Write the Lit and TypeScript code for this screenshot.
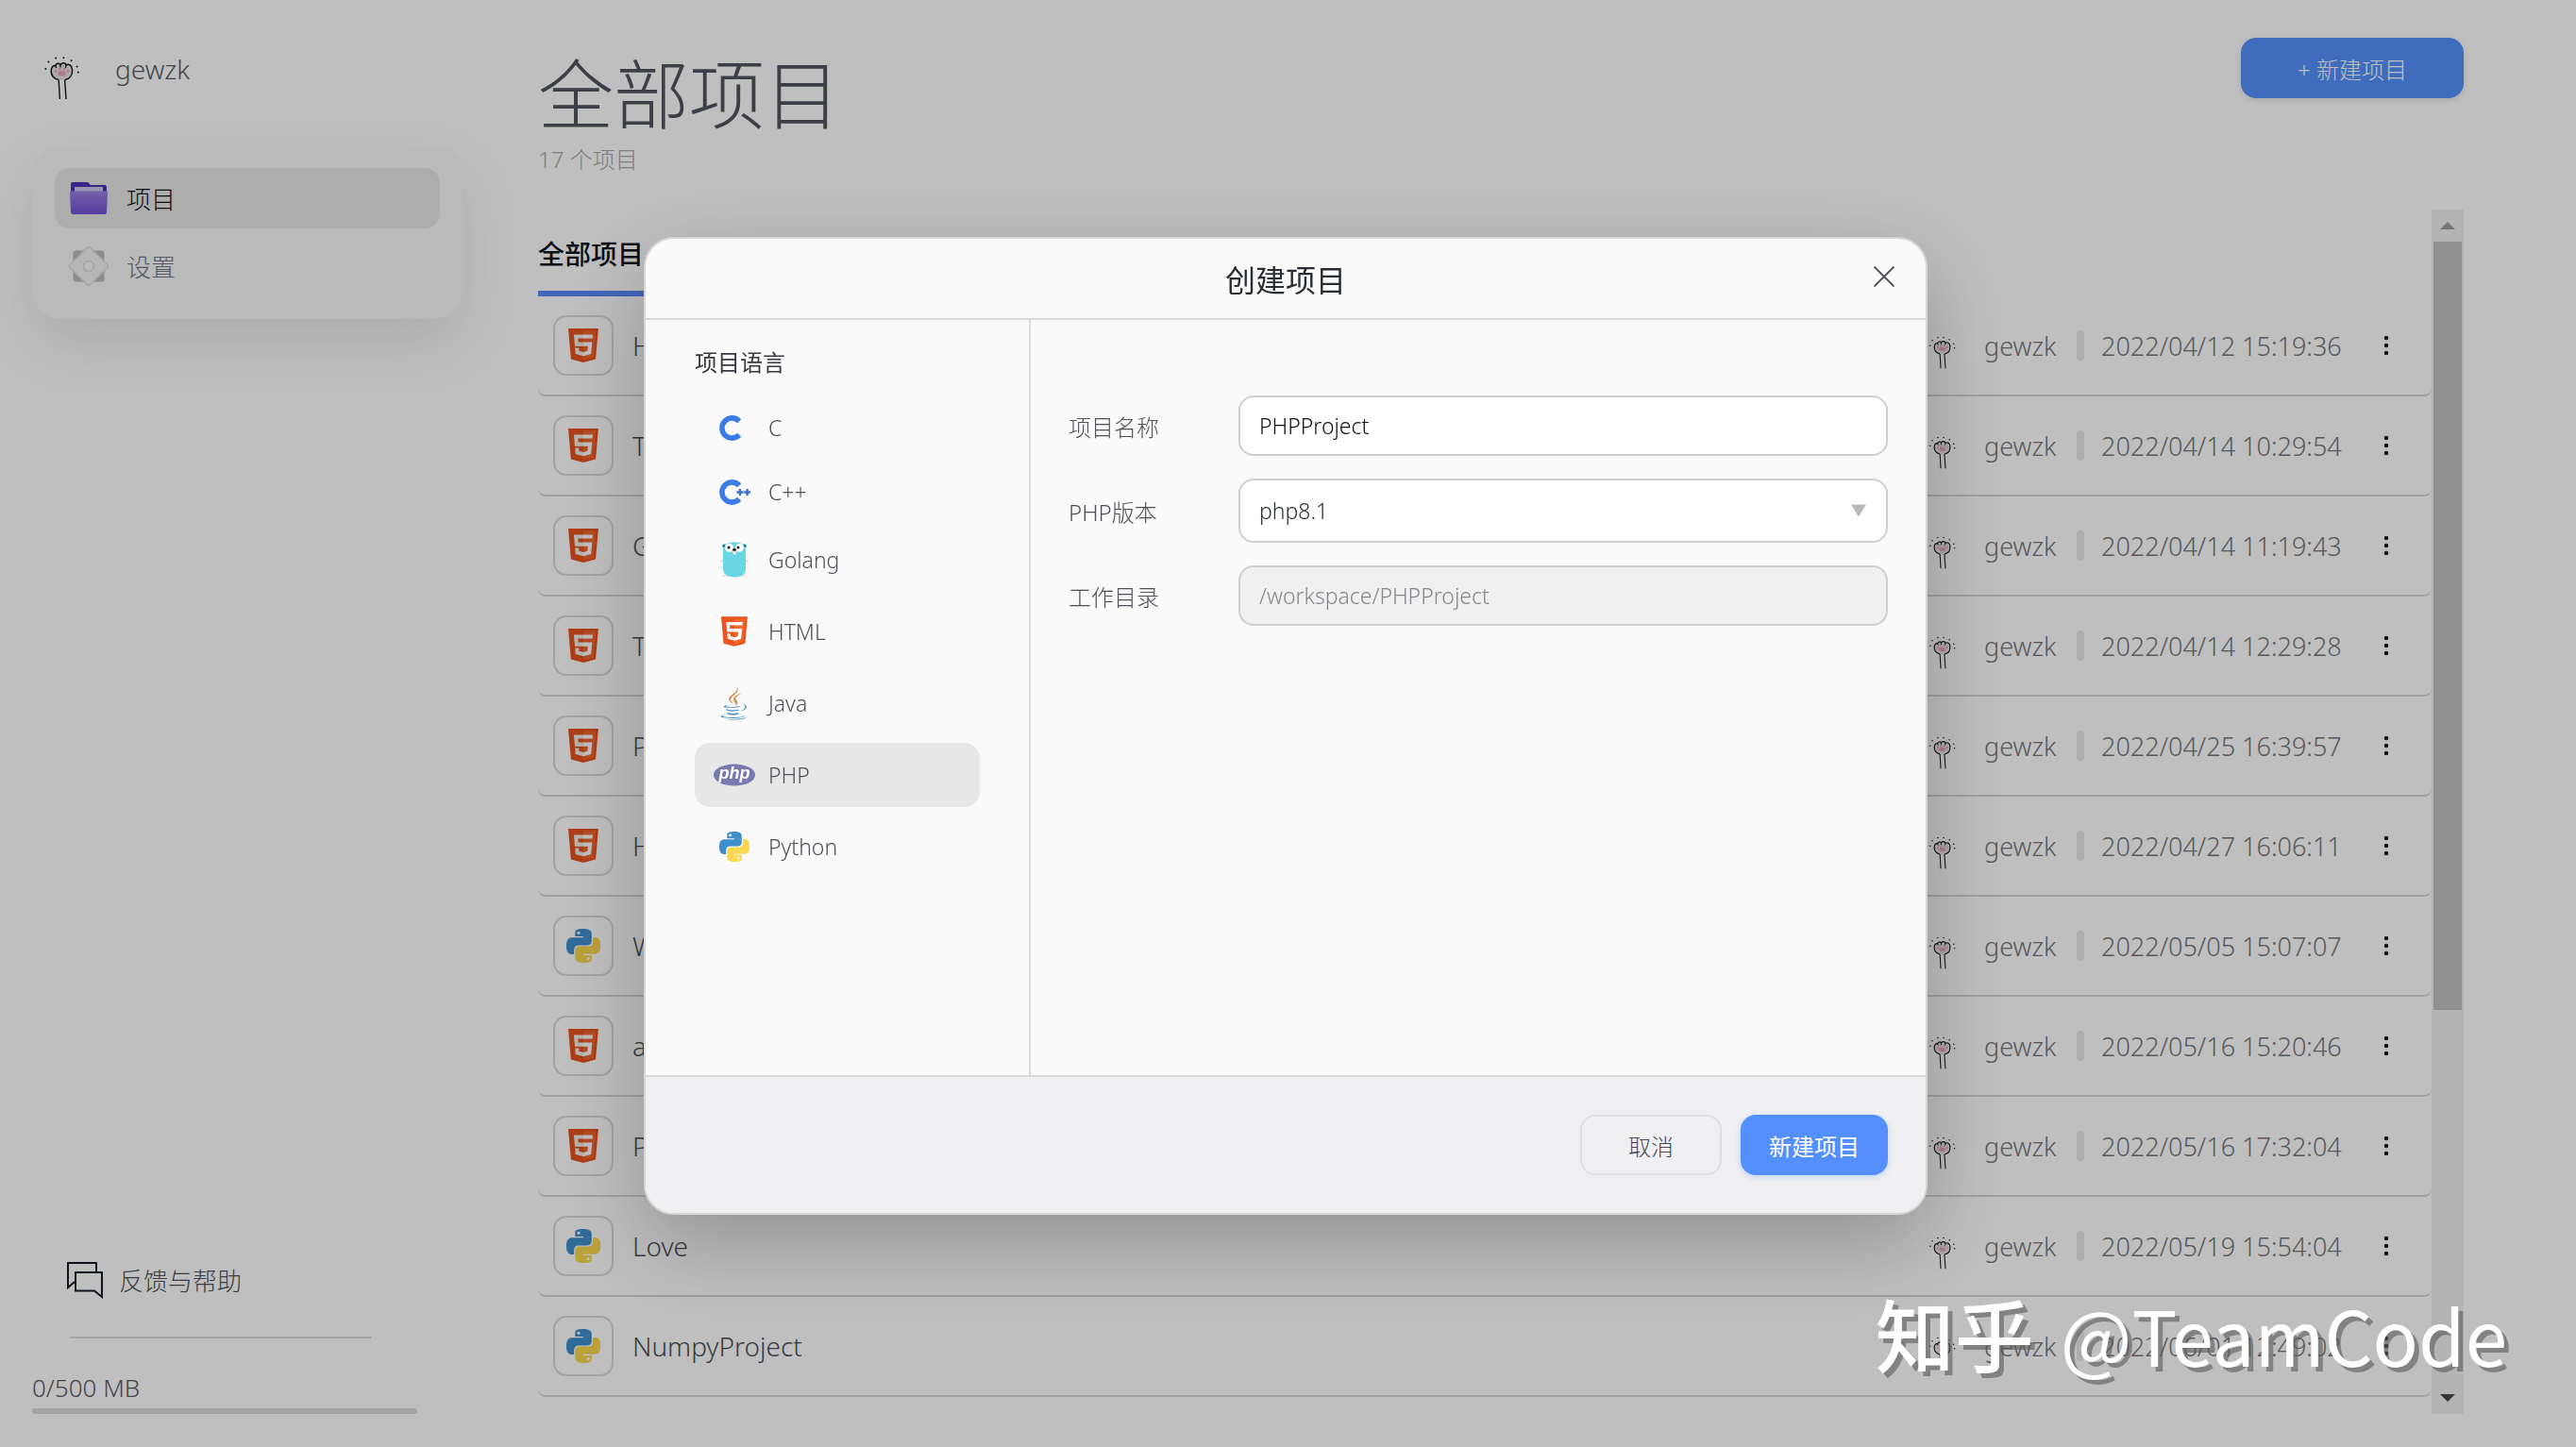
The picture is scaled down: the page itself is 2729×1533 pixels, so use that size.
import { LitElement, html, svg, css, TemplateResult } from "lit";
import { customElement, property, state } from "lit/decorators.js";
import { classMap } from "lit/directives/class-map.js";

type Lang = "c" | "cpp" | "go" | "html" | "java" | "php" | "python";

interface Project {
  name: string;
  lang: Lang;
  date: string;
}

const PROJECTS: Project[] = [
  { name: "H", lang: "html", date: "2022/04/12 15:19:36" },
  { name: "T", lang: "html", date: "2022/04/14 10:29:54" },
  { name: "G", lang: "html", date: "2022/04/14 11:19:43" },
  { name: "T", lang: "html", date: "2022/04/14 12:29:28" },
  { name: "P", lang: "html", date: "2022/04/25 16:39:57" },
  { name: "H", lang: "html", date: "2022/04/27 16:06:11" },
  { name: "W", lang: "python", date: "2022/05/05 15:07:07" },
  { name: "a", lang: "html", date: "2022/05/16 15:20:46" },
  { name: "P", lang: "html", date: "2022/05/16 17:32:04" },
  { name: "Love", lang: "python", date: "2022/05/19 15:54:04" },
  { name: "NumpyProject", lang: "python", date: "2022/06/01 12:49:02" },
];

const LANGUAGES: { id: Lang; label: string; compact?: boolean }[] = [
  { id: "c", label: "C", compact: true },
  { id: "cpp", label: "C++", compact: true },
  { id: "go", label: "Golang" },
  { id: "html", label: "HTML" },
  { id: "java", label: "Java" },
  { id: "php", label: "PHP" },
  { id: "python", label: "Python" },
];

const cArc = svg`<path d="M22.2 6.2A10.6 10.6 0 1 0 22.2 20.8" fill="none" stroke="#3b7be8" stroke-width="5.6"/>`;

const LANG_ICONS: Record<Lang, TemplateResult> = {
  c: html`<svg width="34" height="27" viewBox="0 0 34 27" aria-hidden="true">${cArc}</svg>`,
  cpp: html`<svg width="34" height="27" viewBox="0 0 34 27" aria-hidden="true">
    ${cArc}
    <path d="M19.4 13.5H26.6M23 9.9V17.1M27.2 13.5H34M30.6 10.1V16.9" stroke="#3f73c8" stroke-width="2.4" fill="none" />
  </svg>`,
  go: html`<svg width="30" height="40" viewBox="0 0 30 40" aria-hidden="true">
    <path d="M4.6 35.4L2 38.4L6.4 37.4ZM25.4 35.4L28 38.4L23.6 37.4Z" fill="#f0dcc4" />
    <path d="M3.6 20.6L0.6 22M26.4 20.6L29.4 22" stroke="#e2d6c0" stroke-width="2" />
    <circle cx="4.6" cy="5.6" r="2.6" fill="#6ad0df" />
    <circle cx="25.4" cy="5.6" r="2.6" fill="#6ad0df" />
    <circle cx="4.2" cy="5.6" r="1.4" fill="#26454b" />
    <circle cx="25.8" cy="5.6" r="1.4" fill="#26454b" />
    <path d="M15 1.2C22.6 1.2 27 4.6 27 11V29C27 35.6 23 38.4 15 38.4S3 35.6 3 29V11C3 4.6 7.4 1.2 15 1.2Z" fill="#6ad5e3" />
    <circle cx="9.6" cy="7.4" r="4.4" fill="#fff" />
    <circle cx="20.4" cy="7.4" r="4.4" fill="#fff" />
    <circle cx="9" cy="7" r="1.5" fill="#141c20" />
    <circle cx="19" cy="7" r="1.5" fill="#141c20" />
    <rect x="13.6" y="11" width="3" height="3.6" rx="1" fill="#fff" />
    <ellipse cx="15" cy="10.8" rx="3.2" ry="1.8" fill="#e8d8c0" />
    <ellipse cx="15" cy="9.4" rx="2" ry="1.4" fill="#141c20" />
  </svg>`,
  html: html`<svg class="html" viewBox="0 0 452 512" aria-hidden="true">
    <path fill="#e8531f" d="M41 460L0 0h451l-41 460-185 52" />
    <path fill="#f0662f" d="M226 472l149-41 35-394H226" />
    <path fill="#f3efec" d="M226 208h-75l-5-58h80V94H84l15 171h127zm0 147l-64-17-4-45h-56l7 89 117 32z" />
    <path fill="#fff" d="M226 265h69l-7 73-62 17v59l115-32 16-174H226zm0-171v56h136l5-56z" />
  </svg>`,
  java: html`<svg width="28" height="36" viewBox="20 0 94 128" preserveAspectRatio="none" aria-hidden="true">
    <path fill="#4a93c6" d="M47.617 98.12s-4.767 2.774 3.397 3.71c9.892 1.13 14.947.968 25.845-1.092 0 0 2.871 1.795 6.873 3.351-24.439 10.47-55.308-.607-36.115-5.969zM44.629 84.455s-5.348 3.959 2.823 4.805c10.567 1.091 18.91 1.18 33.354-1.6 0 0 1.993 2.025 5.132 3.131-29.542 8.64-62.446.68-41.309-6.336zM102.123 108.229s3.529 2.91-3.888 5.159c-14.102 4.272-58.706 5.56-71.094.171-4.451-1.938 3.899-4.625 6.526-5.192 2.739-.593 4.303-.485 4.303-.485-4.953-3.487-32.013 6.85-13.743 9.815 49.821 8.076 90.817-3.637 77.896-9.468zM49.912 70.294s-22.686 5.389-8.033 7.348c6.188.828 18.518.638 30.011-.326 9.39-.789 18.813-2.474 18.813-2.474s-3.308 1.419-5.704 3.053c-23.042 6.061-67.544 3.238-54.731-2.958 10.832-5.239 19.644-4.643 19.644-4.643zM90.609 93.041c23.421-12.167 12.591-23.86 5.032-22.285-1.848.385-2.677.72-2.677.72s.688-1.079 2-1.543c14.953-5.255 26.451 15.503-4.823 23.725 0-.002.359-.327.468-.617zM52.214 126.021c22.476 1.437 57-.8 57.817-11.436 0 0-1.571 4.032-18.577 7.231-19.186 3.612-42.854 3.191-56.887.874 0 .001 2.875 2.381 17.647 3.331z" />
    <path fill="#d28a3e" d="M69.802 61.271c6.025 6.935-1.58 13.17-1.58 13.17s15.289-7.891 8.269-17.777c-6.559-9.215-11.587-13.792 15.635-29.58 0 .001-42.731 10.67-22.324 34.187zM76.491 1.587S89.459 14.563 64.188 34.51c-20.266 16.006-4.621 25.13-.007 35.559-11.831-10.673-20.509-20.07-14.688-28.815C58.041 28.42 81.722 22.195 76.491 1.587z" />
  </svg>`,
  php: html`<svg width="44" height="24" viewBox="0 0 44 24" aria-hidden="true">
    <ellipse cx="22" cy="12" rx="22" ry="11.5" fill="#777bb0" />
    <text x="22" y="15.5" text-anchor="middle" font-family="Liberation Sans, sans-serif" font-size="18" font-weight="700" font-style="italic" fill="#fff">php</text>
  </svg>`,
  python: html`<svg class="python" viewBox="0 0 24 24" aria-hidden="true">
    <path fill="#3f8fcd" d="M14.25.18l.9.2.73.26.59.3.45.32.34.34.25.34.16.33.1.3.04.26.02.2-.01.13V8.5l-.05.63-.13.55-.21.46-.26.38-.3.31-.33.25-.35.19-.35.14-.33.1-.3.07-.26.04-.21.02H8.77l-.69.05-.59.14-.5.22-.41.27-.33.32-.27.35-.2.36-.15.37-.1.35-.07.32-.04.27-.02.21v3.06H3.17l-.21-.03-.28-.07-.32-.12-.35-.18-.36-.26-.36-.36-.35-.46-.32-.59-.28-.73-.21-.88-.14-1.05-.05-1.23.06-1.22.16-1.04.24-.87.32-.71.36-.57.4-.44.42-.33.42-.24.4-.16.36-.1.32-.05.24-.01h.16l.06.01h8.16v-.83H6.18l-.01-2.75-.02-.37.05-.34.11-.31.17-.28.25-.26.31-.23.38-.2.44-.18.51-.15.58-.12.64-.1.71-.06.77-.04.84-.02 1.27.05zm-6.3 1.98l-.23.33-.08.41.08.41.23.34.33.22.41.09.41-.09.33-.22.23-.34.08-.41-.08-.41-.23-.33-.33-.22-.41-.09-.41.09z" />
    <path fill="#f9d84f" d="M21.1 6.11l.28.06.32.12.35.18.36.27.36.35.35.47.32.59.28.73.21.88.14 1.04.05 1.23-.06 1.23-.16 1.04-.24.86-.32.71-.36.57-.4.45-.42.33-.42.24-.4.16-.36.09-.32.05-.24.02-.16-.01h-8.22v.82h5.84l.01 2.76.02.36-.05.34-.11.31-.17.29-.25.25-.31.24-.38.2-.44.17-.51.15-.58.13-.64.09-.71.07-.77.04-.84.01-1.27-.04-1.07-.14-.9-.2-.73-.25-.59-.3-.45-.33-.34-.34-.25-.34-.16-.33-.1-.3-.04-.25-.02-.2.01-.13v-5.34l.05-.64.13-.54.21-.46.26-.38.3-.32.33-.24.35-.2.35-.14.33-.1.3-.06.26-.04.21-.02.13-.01h5.84l.69-.05.59-.14.5-.21.41-.28.33-.32.27-.35.2-.36.15-.36.1-.35.07-.32.04-.28.02-.21V6.07h2.09l.14.01zm-6.47 14.25l-.23.33-.08.41.08.41.23.33.33.23.41.08.41-.08.33-.23.23-.33.08-.41-.08-.41-.23-.33-.33-.23-.41-.08-.41.08z" />
  </svg>`,
};

/** Raised cat paw used as the member's avatar. */
const pawIcon = (width: number, height: number) => html`<svg width=${width} height=${height} viewBox="0 0 38 48" aria-hidden="true">
  <path d="M15.2 26.5L16.4 47M21.6 26.5L23 47" stroke="#11161c" stroke-width="1.4" fill="none" />
  <path d="M15.2 26.6C10 26 7 21.5 7.2 17C7.3 13 9.5 10.5 12 11.8C12 9 16 8.2 17 11C18 8 22.5 8.2 23 11.2C25.5 9.2 29.4 11 29.6 16C29.8 21.5 27 25.8 21.8 26.6" fill="#e9e3e4" stroke="#11161c" stroke-width="1.5" stroke-linejoin="round" />
  <path d="M12 11.8L12.6 14M17 11V13.6M23 11.2L22.4 14" stroke="#11161c" stroke-width="1.2" />
  <ellipse cx="18.6" cy="19.8" rx="4.4" ry="2.8" fill="#e9a0bd" />
  <circle cx="12.2" cy="17.4" r="1.3" fill="#e9a0bd" />
  <circle cx="16.4" cy="15.2" r="1.2" fill="#e9a0bd" />
  <circle cx="21.2" cy="15.2" r="1.2" fill="#e9a0bd" />
  <circle cx="25" cy="17.4" r="1.3" fill="#e9a0bd" />
  <g fill="#11161c">
    <circle cx="1.4" cy="15" r="1" /><circle cx="4.4" cy="7.6" r="1" /><circle cx="12.2" cy="3.4" r="1" />
    <circle cx="20.4" cy="3.2" r="1" /><circle cx="28.6" cy="6.2" r="1" /><circle cx="34.6" cy="12.4" r="1" /><circle cx="35.8" cy="18.4" r="1" />
  </g>
</svg>`;

const folderIcon = html`<svg width="40" height="36" viewBox="0 0 40 36" aria-hidden="true">
  <defs>
    <linearGradient id="folder" x1="0" y1="0" x2="0" y2="1">
      <stop offset="0" stop-color="#9b80e4" /><stop offset="1" stop-color="#7450d4" />
    </linearGradient>
  </defs>
  <path d="M1 3Q1 1 3 1H18Q20 1 21 3L22 4H37Q39 4 39 6V14H1Z" fill="#4b30b4" />
  <rect x="5" y="6" width="30" height="7" rx="1" fill="#cdc4f0" />
  <path d="M0 12Q0 10.5 1.6 10.5H38.4Q40 10.5 40 12L39 33Q39 35 37 35H3Q1 35 1 33Z" fill="url(#folder)" />
</svg>`;

const gearIcon = html`<svg width="44" height="44" viewBox="0 0 44 44" aria-hidden="true">
  <rect x="5.5" y="5.5" width="33" height="33" rx="3" fill="#bdbdbd" />
  <rect x="7" y="7" width="30" height="30" rx="2" transform="rotate(45 22 22)" fill="#f4f4f4" stroke="#dedede" stroke-width="1.5" />
  <circle cx="22" cy="22" r="5.5" fill="#fafafa" stroke="#dedede" stroke-width="1.5" />
</svg>`;

const chatIcon = html`<svg width="40" height="40" viewBox="0 0 40 40" aria-hidden="true">
  <path d="M9 22L2 28V2H32V12M10 12H38V38L30 31.5H10Z" fill="none" stroke="#141a26" stroke-width="2" />
</svg>`;

/** One line of the project list: language badge, name, owner, time and menu. */
@customElement("project-row")
export class ProjectRow extends LitElement {
  @property({ attribute: false }) project!: Project;

  static styles = css`
    :host {
      display: flex;
      align-items: center;
      height: 104px;
      padding: 0 38px 0 16px;
      border-bottom: 2px solid #d6d6d6;
      border-radius: 8px;
      font-size: 27px;
      color: #75777d;
    }
    .badge {
      display: grid;
      place-items: center;
      width: 60px;
      height: 60px;
      border: 2px solid #d8d8d8;
      border-radius: 14px;
    }
    .badge .html {
      width: 32px;
      height: 38px;
    }
    .badge .python {
      width: 36px;
      height: 36px;
    }
    .name {
      flex: 1;
      padding-left: 20px;
      font-size: 28px;
      color: #4c4f58;
      text-decoration: none;
    }
    .owner {
      display: grid;
      grid-template-columns: 32px 80px;
      column-gap: 28px;
      align-items: center;
    }
    .owner svg {
      margin-top: 14px;
    }
    .bar {
      width: 8px;
      height: 32px;
      margin: 0 18px;
      border-radius: 4px;
      background: #e8e8e8;
    }
    time {
      width: 256px;
      white-space: nowrap;
    }
    .menu {
      display: grid;
      place-items: center;
      width: 20px;
      height: 40px;
      margin-left: 36px;
      padding: 0;
      border: 0;
      background: none;
    }
  `;

  render() {
    const { name, lang, date } = this.project;
    return html`
      <span class="badge">${LANG_ICONS[lang]}</span>
      <a class="name" href="#">${name}</a>
      <span class="owner">${pawIcon(32, 36)}<span>gewzk</span></span>
      <span class="bar"></span>
      <time>${date}</time>
      <button class="menu" type="button" aria-haspopup="menu">
        <svg width="6" height="24" viewBox="0 0 6 24" aria-hidden="true" fill="#10141c">
          <circle cx="3" cy="4" r="2.2" /><circle cx="3" cy="12" r="2.2" /><circle cx="3" cy="20" r="2.2" />
        </svg>
      </button>
    `;
  }
}

/** Dialog in which a new project is named and configured. */
@customElement("create-dialog")
export class CreateDialog extends LitElement {
  @state() private lang: Lang = "php";
  @state() private projectName = "PHPProject";

  static styles = css`
    :host {
      display: flex;
      flex-direction: column;
      box-sizing: border-box;
      width: 1360px;
      max-width: 100%;
      border: 2px solid #d6d6d6;
      border-radius: 32px;
      overflow: hidden;
      background: #fafafa;
      box-shadow: 0 30px 90px rgba(0, 0, 0, 0.24);
      font-size: 24px;
      color: #4e515a;
    }
    header {
      display: grid;
      grid-template-columns: 64px 1fr 64px;
      align-items: center;
      height: 84px;
      border-bottom: 2px solid #dadada;
    }
    h2 {
      grid-column: 2;
      margin: 0;
      text-align: center;
      font-size: 32px;
      font-weight: 400;
      color: #2a2d36;
    }
    .close {
      display: grid;
      place-items: center;
      width: 40px;
      height: 40px;
      margin-bottom: 4px;
      padding: 0;
      border: 0;
      background: none;
    }
    .body {
      display: grid;
      grid-template-columns: 408px 1fr;
      min-height: 800px;
    }
    .languages {
      padding: 28px 52px 30px;
      border-right: 2px solid #dadada;
    }
    h3 {
      margin: 0 0 22px;
      font-size: 24px;
      line-height: 34px;
      font-weight: 400;
      color: #363942;
    }
    ul {
      display: grid;
      gap: 8px;
      margin: 0;
      padding: 0;
      list-style: none;
    }
    .language {
      display: flex;
      align-items: center;
      gap: 14px;
      width: 100%;
      height: 68px;
      padding: 0 20px;
      border: 0;
      border-radius: 16px;
      background: none;
      font: inherit;
      font-size: 23px;
      color: inherit;
    }
    .language.compact {
      height: 60px;
    }
    .language.selected {
      background: #e7e7e7;
    }
    .icon {
      display: grid;
      place-items: center;
      width: 44px;
    }
    .icon .html {
      width: 28px;
      height: 32px;
    }
    .icon .python {
      width: 32px;
      height: 32px;
    }
    form {
      display: grid;
      grid-template-columns: 180px 1fr;
      row-gap: 24px;
      align-content: start;
      align-items: center;
      padding: 80px 40px 40px;
    }
    input,
    .select {
      box-sizing: border-box;
      width: 100%;
      height: 64px;
      border: 2px solid #cfcfcf;
      border-radius: 16px;
      background: #fff;
    }
    input,
    select {
      padding: 0 20px;
      font: inherit;
      font-size: 23px;
      color: #0e1119;
    }
    input:disabled {
      background: #f0f0f0;
      color: #85878c;
    }
    .select {
      display: grid;
      grid-template-columns: 1fr 38px;
      align-items: center;
      height: 68px;
    }
    select {
      grid-area: 1 / 1 / 2 / 3;
      height: 100%;
      border: 0;
      border-radius: 16px;
      appearance: none;
      background: none;
      color: #2b2f38;
    }
    .caret {
      grid-area: 1 / 2;
      pointer-events: none;
    }
    footer {
      display: flex;
      justify-content: flex-end;
      gap: 20px;
      padding: 40px;
      border-top: 2px solid #dadada;
      background: #f0f0f2;
    }
    .action {
      box-sizing: border-box;
      height: 64px;
      min-width: 150px;
      padding: 0 30px;
      border: 2px solid #e0e0e2;
      border-radius: 16px;
      background: none;
      font: inherit;
      color: #454851;
    }
    .action.primary {
      border: 0;
      background: #5490fd;
      color: #fff;
      font-weight: 400;
      box-shadow: 0 2px 6px rgba(84, 144, 253, 0.3);
    }
  `;

  render() {
    return html`
      <header>
        <h2 id="title">创建项目</h2>
        <button class="close" type="button">
          <svg width="24" height="24" viewBox="0 0 24 24" aria-hidden="true">
            <path d="M1.5 1.5L22.5 22.5M22.5 1.5L1.5 22.5" stroke="#50535a" stroke-width="1.8" />
          </svg>
        </button>
      </header>
      <div class="body">
        <nav class="languages">
          <h3>项目语言</h3>
          <ul>
            ${LANGUAGES.map(
              (l) => html`<li>
                <button
                  type="button"
                  class=${classMap({ language: true, compact: !!l.compact, selected: l.id === this.lang })}
                  @click=${() => (this.lang = l.id)}
                >
                  <span class="icon">${LANG_ICONS[l.id]}</span>${l.label}
                </button>
              </li>`
            )}
          </ul>
        </nav>
        <form>
          <label for="name">项目名称</label>
          <input
            id="name"
            type="text"
            .value=${this.projectName}
            @input=${(e: Event) => (this.projectName = (e.target as HTMLInputElement).value)}
          />
          <label for="version">PHP版本</label>
          <div class="select">
            <select id="version"><option>php8.1</option></select>
            <svg class="caret" width="18" height="14" viewBox="0 0 18 14" aria-hidden="true"><path d="M1 0.5H17L9 13.5Z" fill="#bababa" /></svg>
          </div>
          <label for="dir">工作目录</label>
          <input id="dir" type="text" disabled .value=${"/workspace/" + this.projectName} />
        </form>
      </div>
      <footer>
        <button class="action" type="button">取消</button>
        <button class="action primary" type="button">新建项目</button>
      </footer>
    `;
  }
}

@customElement("app-root")
export class AppRoot extends LitElement {
  static styles = css`
    :host {
      display: block;
      font-family: "Noto Sans", "Noto Sans CJK SC", sans-serif;
      font-weight: 300;
      font-size: 26px;
      color: #5a5d66;
    }
    .page {
      display: grid;
      grid-template-columns: 536px 1fr;
      box-sizing: border-box;
      min-height: 100vh;
      padding: 40px 119px 35px 34px;
      background: #fff;
    }
    aside {
      display: flex;
      flex-direction: column;
      width: 456px;
    }
    .user {
      display: flex;
      align-items: center;
      gap: 37px;
      height: 66px;
      margin-bottom: 48px;
      padding-left: 13px;
      font-size: 28px;
    }
    .user svg {
      margin-top: 18px;
    }
    .card {
      display: grid;
      gap: 8px;
      padding: 24px;
      border-radius: 30px;
      background: #f9f9f9;
      box-shadow: 0 26px 64px rgba(0, 0, 0, 0.1);
    }
    .item {
      display: flex;
      align-items: center;
      gap: 18px;
      height: 64px;
      padding-left: 14px;
      border-radius: 16px;
      text-decoration: none;
      color: #75777d;
    }
    .item.active {
      background: #e7e7e7;
      color: #10121e;
    }
    .slot {
      display: grid;
      place-items: center;
      width: 44px;
    }
    .help {
      display: flex;
      align-items: center;
      gap: 16px;
      margin: auto 0 40px;
      padding-left: 36px;
      text-decoration: none;
      color: #4f525b;
    }
    .rule {
      width: 320px;
      height: 2px;
      margin: 0 0 34px 40px;
      border-radius: 1px;
      background: #dadada;
    }
    .quota {
      line-height: 36px;
      padding-bottom: 4px;
    }
    .meter {
      width: 408px;
      height: 6px;
      border-radius: 3px;
      background: #dadada;
    }
    main {
      display: flex;
      flex-direction: column;
      min-width: 0;
    }
    .top {
      display: flex;
      justify-content: space-between;
      align-items: flex-start;
      height: 182px;
    }
    h1 {
      margin: 0;
      padding-top: 4px;
      font-size: 80px;
      line-height: 110px;
      font-weight: 300;
      color: #51545f;
    }
    .count {
      margin: 0;
      font-size: 24px;
      line-height: 30px;
      color: #a8a8a8;
    }
    .create {
      width: 236px;
      height: 64px;
      padding: 0;
      border: 0;
      border-radius: 16px;
      background: #5490fd;
      color: #fff;
      font: inherit;
      font-size: 24px;
      box-shadow: 0 2px 6px rgba(0, 0, 0, 0.12);
    }
    .scroll {
      display: grid;
      grid-template-columns: 1fr 34px;
      flex: 1;
    }
    .tab {
      display: block;
      box-sizing: content-box;
      width: 112px;
      height: 80px;
      padding: 6px 0 0;
      border: 0;
      border-bottom: 6px solid #5888f8;
      background: none;
      font: inherit;
      font-size: 28px;
      font-weight: 500;
      white-space: nowrap;
      color: #0d1220;
    }
    .projects {
      margin: 0;
      padding: 0;
      list-style: none;
    }
    .track {
      display: flex;
      flex-direction: column;
      align-items: center;
      background: #f0f0f0;
    }
    .arrow {
      display: grid;
      place-items: center;
      height: 34px;
    }
    .thumb {
      width: 30px;
      height: 814px;
      background: #c0c0c0;
    }
    .track .arrow:last-child {
      margin-top: auto;
    }
    .scrim {
      position: fixed;
      inset: 0;
      display: grid;
      place-items: center;
      padding: 5px 5px 0 0;
      background: rgba(0, 0, 0, 0.25);
    }
    .watermark {
      position: fixed;
      right: 73px;
      bottom: 60px;
      display: flex;
      align-items: baseline;
      gap: 28px;
      font-family: "Noto Sans CJK SC", sans-serif;
      font-size: 80px;
      line-height: 120px;
      font-weight: 400;
      white-space: nowrap;
      color: #fff;
      text-shadow: 5px 5px 0 rgba(90, 90, 90, 0.6);
    }
    .site {
      font-size: 84px;
      font-weight: 500;
    }
  `;

  render() {
    return html`
      <div class="page">
        <aside>
          <div class="user">${pawIcon(38, 48)}<span>gewzk</span></div>
          <nav class="card">
            <a class="item active" href="#projects"><span class="slot">${folderIcon}</span>项目</a>
            <a class="item" href="#settings"><span class="slot">${gearIcon}</span>设置</a>
          </nav>
          <a class="help" href="#help">${chatIcon}反馈与帮助</a>
          <div class="rule"></div>
          <div class="quota">0/500 MB</div>
          <div class="meter"></div>
        </aside>
        <main>
          <div class="top">
            <div>
              <h1>全部项目</h1>
              <p class="count">17 个项目</p>
            </div>
            <button class="create" type="button">+ 新建项目</button>
          </div>
          <div class="scroll">
            <div>
              <button class="tab" type="button">全部项目</button>
              <ul class="projects">
                ${PROJECTS.map((p) => html`<li><project-row .project=${p}></project-row></li>`)}
              </ul>
            </div>
            <div class="track">
              <span class="arrow"><svg width="16" height="8" viewBox="0 0 16 8"><path d="M0 8L8 0L16 8Z" fill="#9e9e9e" /></svg></span>
              <span class="thumb"></span>
              <span class="arrow"><svg width="16" height="8" viewBox="0 0 16 8"><path d="M0 0L8 8L16 0Z" fill="#484848" /></svg></span>
            </div>
          </div>
        </main>
      </div>
      <div class="scrim">
        <create-dialog role="dialog" aria-modal="true"></create-dialog>
      </div>
      <div class="watermark"><span class="site">知乎</span><span>@TeamCode</span></div>
    `;
  }
}
